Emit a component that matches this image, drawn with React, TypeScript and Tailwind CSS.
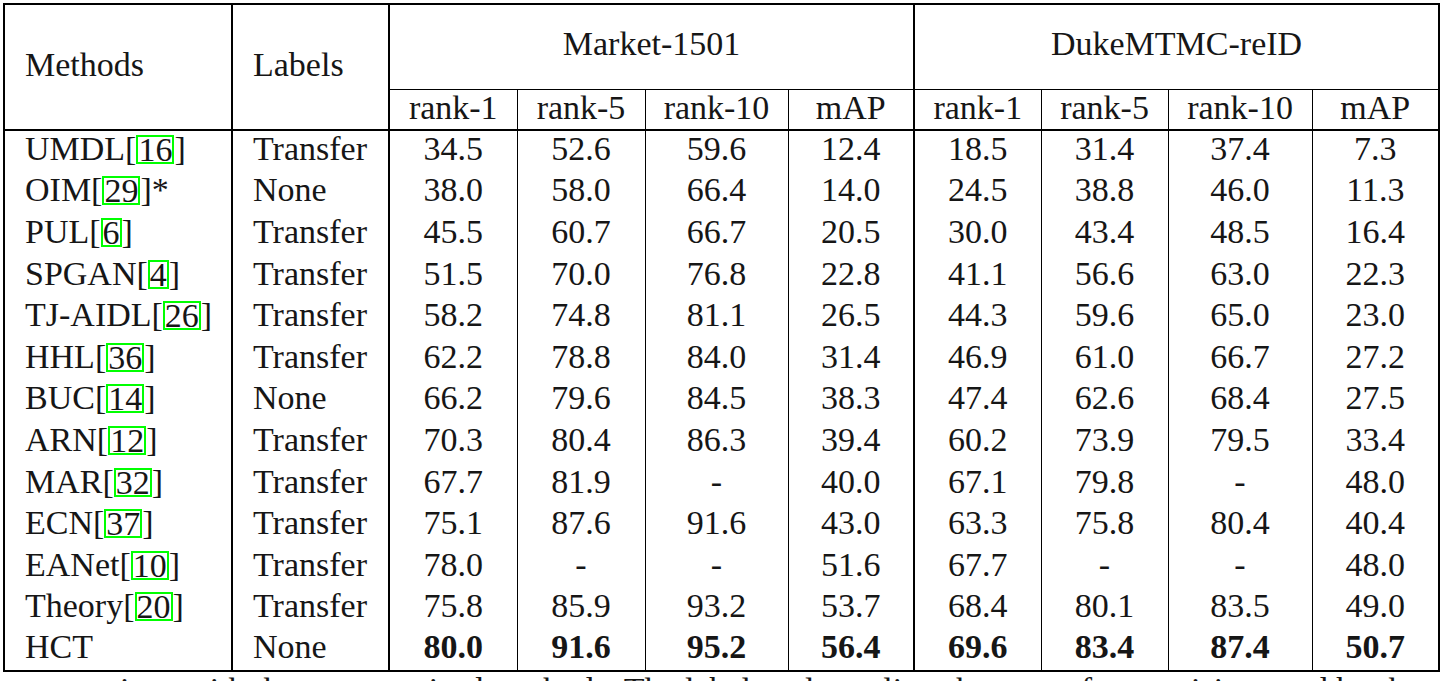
type Row = {
  name: string;
  cite: string;
  star?: boolean;
  label: string;
  vals: string[];
  bold?: boolean;
};

const rows: Row[] = [
  { name: "UMDL", cite: "16", label: "Transfer", vals: ["34.5", "52.6", "59.6", "12.4", "18.5", "31.4", "37.4", "7.3"] },
  { name: "OIM", cite: "29", star: true, label: "None", vals: ["38.0", "58.0", "66.4", "14.0", "24.5", "38.8", "46.0", "11.3"] },
  { name: "PUL", cite: "6", label: "Transfer", vals: ["45.5", "60.7", "66.7", "20.5", "30.0", "43.4", "48.5", "16.4"] },
  { name: "SPGAN", cite: "4", label: "Transfer", vals: ["51.5", "70.0", "76.8", "22.8", "41.1", "56.6", "63.0", "22.3"] },
  { name: "TJ-AIDL", cite: "26", label: "Transfer", vals: ["58.2", "74.8", "81.1", "26.5", "44.3", "59.6", "65.0", "23.0"] },
  { name: "HHL", cite: "36", label: "Transfer", vals: ["62.2", "78.8", "84.0", "31.4", "46.9", "61.0", "66.7", "27.2"] },
  { name: "BUC", cite: "14", label: "None", vals: ["66.2", "79.6", "84.5", "38.3", "47.4", "62.6", "68.4", "27.5"] },
  { name: "ARN", cite: "12", label: "Transfer", vals: ["70.3", "80.4", "86.3", "39.4", "60.2", "73.9", "79.5", "33.4"] },
  { name: "MAR", cite: "32", label: "Transfer", vals: ["67.7", "81.9", "-", "40.0", "67.1", "79.8", "-", "48.0"] },
  { name: "ECN", cite: "37", label: "Transfer", vals: ["75.1", "87.6", "91.6", "43.0", "63.3", "75.8", "80.4", "40.4"] },
  { name: "EANet", cite: "10", label: "Transfer", vals: ["78.0", "-", "-", "51.6", "67.7", "-", "-", "48.0"] },
  { name: "Theory", cite: "20", label: "Transfer", vals: ["75.8", "85.9", "93.2", "53.7", "68.4", "80.1", "83.5", "49.0"] },
  { name: "HCT", cite: "", label: "None", vals: ["80.0", "91.6", "95.2", "56.4", "69.6", "83.4", "87.4", "50.7"], bold: true },
];

const subHeads = ["rank-1", "rank-5", "rank-10", "mAP"];

function Cite({ n }: { n: string }) {
  return (
    <>
      [<span className="inline-block border-2 border-[#00ff00] leading-[25px] align-[-1px]">{n}</span>]
    </>
  );
}

export default function App() {
  return (
    <div className="w-[1443px] h-[681px] overflow-hidden bg-white text-[#161616] font-['Liberation_Serif',serif] text-[34px]">
      <table className="ml-[3px] mt-[3px] w-[1435px] table-fixed border-collapse border-2 border-black">
        <colgroup>
          <col className="w-[228px]" />
          <col className="w-[157px]" />
          <col className="w-[128px]" />
          <col className="w-[128px]" />
          <col className="w-[143px]" />
          <col className="w-[126px]" />
          <col className="w-[127px]" />
          <col className="w-[127px]" />
          <col className="w-[144px]" />
          <col className="w-[127px]" />
        </colgroup>
        <thead>
          <tr className="h-[85px]">
            <th rowSpan={2} className="border-2 border-black font-normal text-left pl-[20px] pb-[6px]">Methods</th>
            <th rowSpan={2} className="border-2 border-black font-normal text-left pl-[20px] pb-[6px]">Labels</th>
            <th colSpan={4} className="border-2 border-black border-b font-normal text-center pb-[6px]">Market-1501</th>
            <th colSpan={4} className="border-2 border-black border-b font-normal text-center pb-[6px]">DukeMTMC-reID</th>
          </tr>
          <tr className="h-[41px]">
            {[0, 1].map((g) =>
              subHeads.map((s, i) => (
                <th
                  key={g + s}
                  className={`border-t border-b-2 border-black font-normal text-center leading-[33px] pb-[4px] ${i === 0 ? "border-l-2" : "border-l"}`}
                >
                  {s}
                </th>
              ))
            )}
          </tr>
        </thead>
        <tbody>
          {rows.map((r) => (
            <tr key={r.name} className="h-[41.6px]">
              <td className="border-r-2 border-black text-left pl-[20px] leading-[33px] pb-[5px] whitespace-nowrap">
                {r.name}
                {r.cite && <Cite n={r.cite} />}
                {r.star && "*"}
              </td>
              <td className="border-r-2 border-black text-left pl-[20px] leading-[33px] pb-[5px]">{r.label}</td>
              {r.vals.map((v, i) => (
                <td
                  key={i}
                  className={`border-black text-center leading-[33px] pb-[5px] ${i === 3 ? "border-r-2" : "border-r"} ${r.bold ? "font-bold" : ""}`}
                >
                  {v}
                </td>
              ))}
            </tr>
          ))}
        </tbody>
      </table>
      <div className="mt-[1px] pl-[18px] leading-[33px] whitespace-nowrap">
        comparison with the unsupervised methods. The labels column lists the type of supervision used by the method.
      </div>
    </div>
  );
}
